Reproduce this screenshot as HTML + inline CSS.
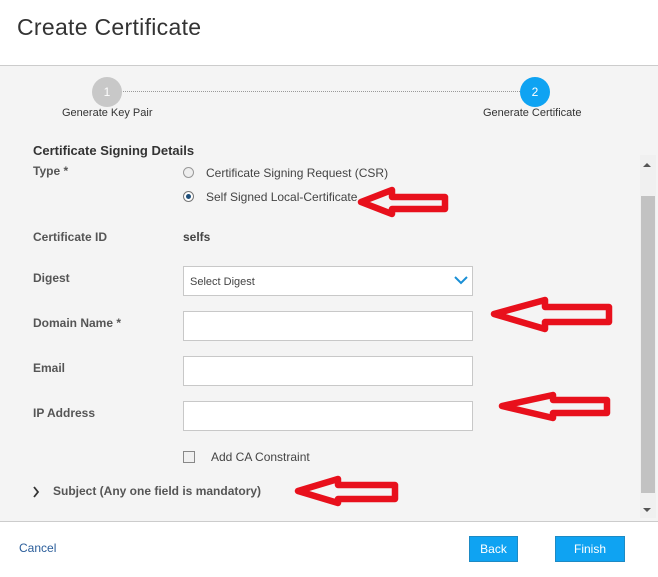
<!DOCTYPE html>
<html><head><style>
body{margin:0;width:658px;height:577px;background:#fff;font-family:"Liberation Sans",Arial,sans-serif;position:relative;overflow:hidden;color:#333}
.a{position:absolute}
.lbl{position:absolute;left:33px;font-size:12px;font-weight:bold;color:#555}
.inp{position:absolute;left:183px;width:288px;height:28px;background:#fff;border:1px solid #c8c8c8}
.btn{position:absolute;background:#0fa3f2;color:#fff;font-size:12px;text-align:center;line-height:24px;border:1px solid #1d8ac4}
</style></head><body>
<div class="a" style="left:17px;top:14px;font-size:23px;color:#333;letter-spacing:0.3px">Create Certificate</div>
<div class="a" style="left:0;top:65px;width:658px;height:455px;background:#f4f4f4;border-top:1px solid #ccc;border-bottom:1px solid #ccc"></div>
<div class="a" style="left:120px;top:91px;width:400px;border-top:1px dotted #999"></div>
<div class="a" style="left:92px;top:77px;width:30px;height:30px;border-radius:50%;background:#c8c8c8;color:#fff;font-size:12px;text-align:center;line-height:30px">1</div>
<div class="a" style="left:520px;top:77px;width:30px;height:30px;border-radius:50%;background:#0fa3f2;color:#fff;font-size:12px;text-align:center;line-height:30px">2</div>
<div class="a" style="left:62px;top:107px;font-size:11px;color:#333">Generate Key Pair</div>
<div class="a" style="left:483px;top:107px;font-size:11px;color:#333">Generate Certificate</div>
<div class="a" style="left:33px;top:143px;font-size:13px;font-weight:bold;color:#333">Certificate Signing Details</div>
<div class="lbl" style="top:164px">Type *</div>
<div class="a" style="left:183px;top:167px;width:9px;height:9px;border-radius:50%;border:1px solid #999;background:#eee"></div>
<div class="a" style="left:206px;top:166px;font-size:12px;color:#444">Certificate Signing Request (CSR)</div>
<div class="a" style="left:183px;top:191px;width:9px;height:9px;border-radius:50%;border:1px solid #777;background:#fff"><div style="margin:2px;width:5px;height:5px;border-radius:50%;background:#1f4f7a"></div></div>
<div class="a" style="left:206px;top:190px;font-size:12px;color:#444">Self Signed Local-Certificate</div>
<div class="lbl" style="top:230px">Certificate ID</div>
<div class="a" style="left:183px;top:230px;font-size:12px;font-weight:bold;color:#444">selfs</div>
<div class="lbl" style="top:271px">Digest</div>
<div class="inp" style="top:266px"><span style="position:absolute;left:6px;top:9px;font-size:11px;color:#444">Select Digest</span>
<svg style="position:absolute;right:4px;top:8px" width="14" height="10"><path d="M1 2 L7 8 L13 2" stroke="#1a8fd6" stroke-width="2" fill="none"/></svg></div>
<div class="lbl" style="top:316px">Domain Name *</div>
<div class="inp" style="top:311px"></div>
<div class="lbl" style="top:361px">Email</div>
<div class="inp" style="top:356px"></div>
<div class="lbl" style="top:406px">IP Address</div>
<div class="inp" style="top:401px"></div>
<div class="a" style="left:183px;top:451px;width:10px;height:10px;border:1px solid #888;background:#f0f0f0"></div>
<div class="a" style="left:211px;top:450px;font-size:12px;color:#444">Add CA Constraint</div>
<svg class="a" style="left:32px;top:486px" width="8" height="12"><path d="M2 1 L6 6 L2 11" stroke="#333" stroke-width="1.8" fill="none"/></svg>
<div class="lbl" style="left:53px;top:484px">Subject (Any one field is mandatory)</div>
<div class="a" style="left:640px;top:155px;width:16px;height:363px;background:#f0f0f0"></div>
<div class="a" style="left:641px;top:196px;width:14px;height:297px;background:#c2c2c2"></div>
<svg class="a" style="left:643px;top:162px" width="8" height="6"><path d="M0 5 L4 1 L8 5Z" fill="#555"/></svg>
<svg class="a" style="left:643px;top:507px" width="8" height="6"><path d="M0 1 L4 5 L8 1Z" fill="#555"/></svg>
<svg class="a" style="left:0;top:0" width="658" height="577">
<g fill="none" stroke="#e8101c" stroke-width="6.5" stroke-linejoin="round">
<path d="M361 202 L392 190 L392 197 L445 197 L445 209 L392 209 L392 214 Z"/>
<path d="M494 314 L545 300 L545 307 L609 307 L609 322 L545 322 L545 329 Z"/>
<path d="M502 406 L553 395 L553 400 L607 400 L607 413 L553 413 L553 418 Z"/>
<path d="M298 491 L338 479 L338 485 L395 485 L395 499 L338 499 L338 503 Z"/>
</g></svg>
<div class="a" style="left:19px;top:541px;font-size:12px;color:#2a5d9a">Cancel</div>
<div class="btn" style="left:469px;top:536px;width:47px">Back</div>
<div class="btn" style="left:555px;top:536px;width:68px">Finish</div>
</body></html>
